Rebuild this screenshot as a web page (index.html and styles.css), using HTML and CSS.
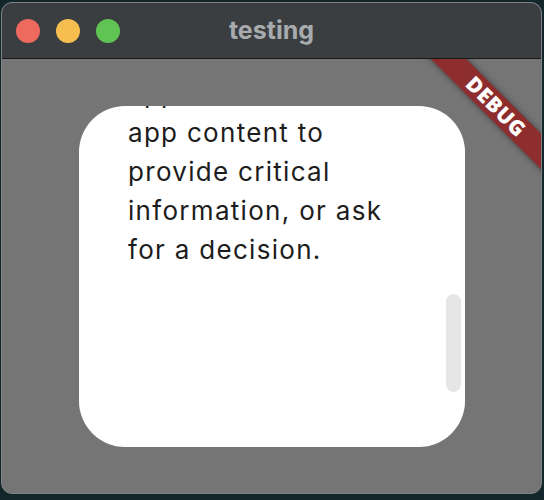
FILE: index.html
```html
<!DOCTYPE html>
<html>
<head>
<meta charset="utf-8">
<link rel="stylesheet" href="styles.css">
</head>
<body>
<div class="window">
  <div class="titlebar">
    <div class="lights">
      <span class="light red"></span>
      <span class="light yellow"></span>
      <span class="light green"></span>
    </div>
    <div class="title">testing</div>
  </div>
  <div class="content">
    <div class="dialog">
      <div class="scroll">
        <p class="text">A dialog is a type of<br>modal window that<br>appears in front of<br>app content to<br>provide critical<br>information, or ask<br>for a decision.</p>
      </div>
      <div class="thumb"></div>
    </div>
    <div class="banner">DEBUG</div>
  </div>
</div>
</body>
</html>
```

FILE: styles.css
```css
html, body {
  margin: 0;
  padding: 0;
  background: #13262a;
  width: 544px;
  height: 500px;
  overflow: hidden;
}
.window {
  margin: 2px 0 0 1px;
  width: 541px;
  height: 492px;
  box-sizing: border-box;
  border: 1px solid #7e8283;
  border-radius: 11px;
  overflow: hidden;
  display: flex;
  flex-direction: column;
  background: #757575;
}
.titlebar {
  height: 55px;
  flex: none;
  background: #3a3e41;
  border-bottom: 1px solid #161819;
  display: flex;
  align-items: center;
  position: relative;
}
.lights {
  display: flex;
  gap: 16px;
  padding-left: 14px;
}
.light {
  width: 24px;
  height: 24px;
  border-radius: 50%;
  display: block;
}
.red { background: #ee6a5f; }
.yellow { background: #f5be4f; }
.green { background: #5fc453; }
.title {
  position: absolute;
  left: 0;
  right: 0;
  top: 0;
  bottom: 0;
  display: flex;
  align-items: center;
  justify-content: center;
  font-family: Inter, "Liberation Sans", sans-serif;
  font-weight: 700;
  font-size: 25px;
  color: #a8abae;
  padding-bottom: 2px;
}
.content {
  flex: 1;
  position: relative;
  overflow: hidden;
  background: #757575;
  display: flex;
  align-items: center;
  justify-content: center;
}
.dialog {
  width: 386px;
  height: 341px;
  background: #ffffff;
  border-radius: 46px;
  overflow: hidden;
  position: relative;
  margin-left: 1px;
}
.scroll {
  height: 100%;
  overflow: hidden;
}
.text {
  margin: -110px 0 0 0;
  padding-left: 49px;
  font-family: Inter, "Liberation Sans", sans-serif;
  font-size: 26px;
  line-height: 39px;
  letter-spacing: 1.3px;
  color: #1d1d1d;
  white-space: nowrap;
}
.thumb {
  position: absolute;
  right: 4px;
  top: 188px;
  width: 15px;
  height: 98px;
  border-radius: 8px;
  background: #e6e6e6;
}
.banner {
  position: absolute;
  top: 35px;
  right: -55px;
  width: 200px;
  height: 25px;
  transform: rotate(45deg);
  background: #8e2d2d;
  box-shadow: 0 0 6px rgba(0,0,0,0.45);
  color: #ffffff;
  font-family: "Open Sans", "DejaVu Sans", sans-serif;
  font-weight: 800;
  font-size: 21px;
  line-height: 25px;
  text-align: center;
  letter-spacing: 0.5px;
}
```
